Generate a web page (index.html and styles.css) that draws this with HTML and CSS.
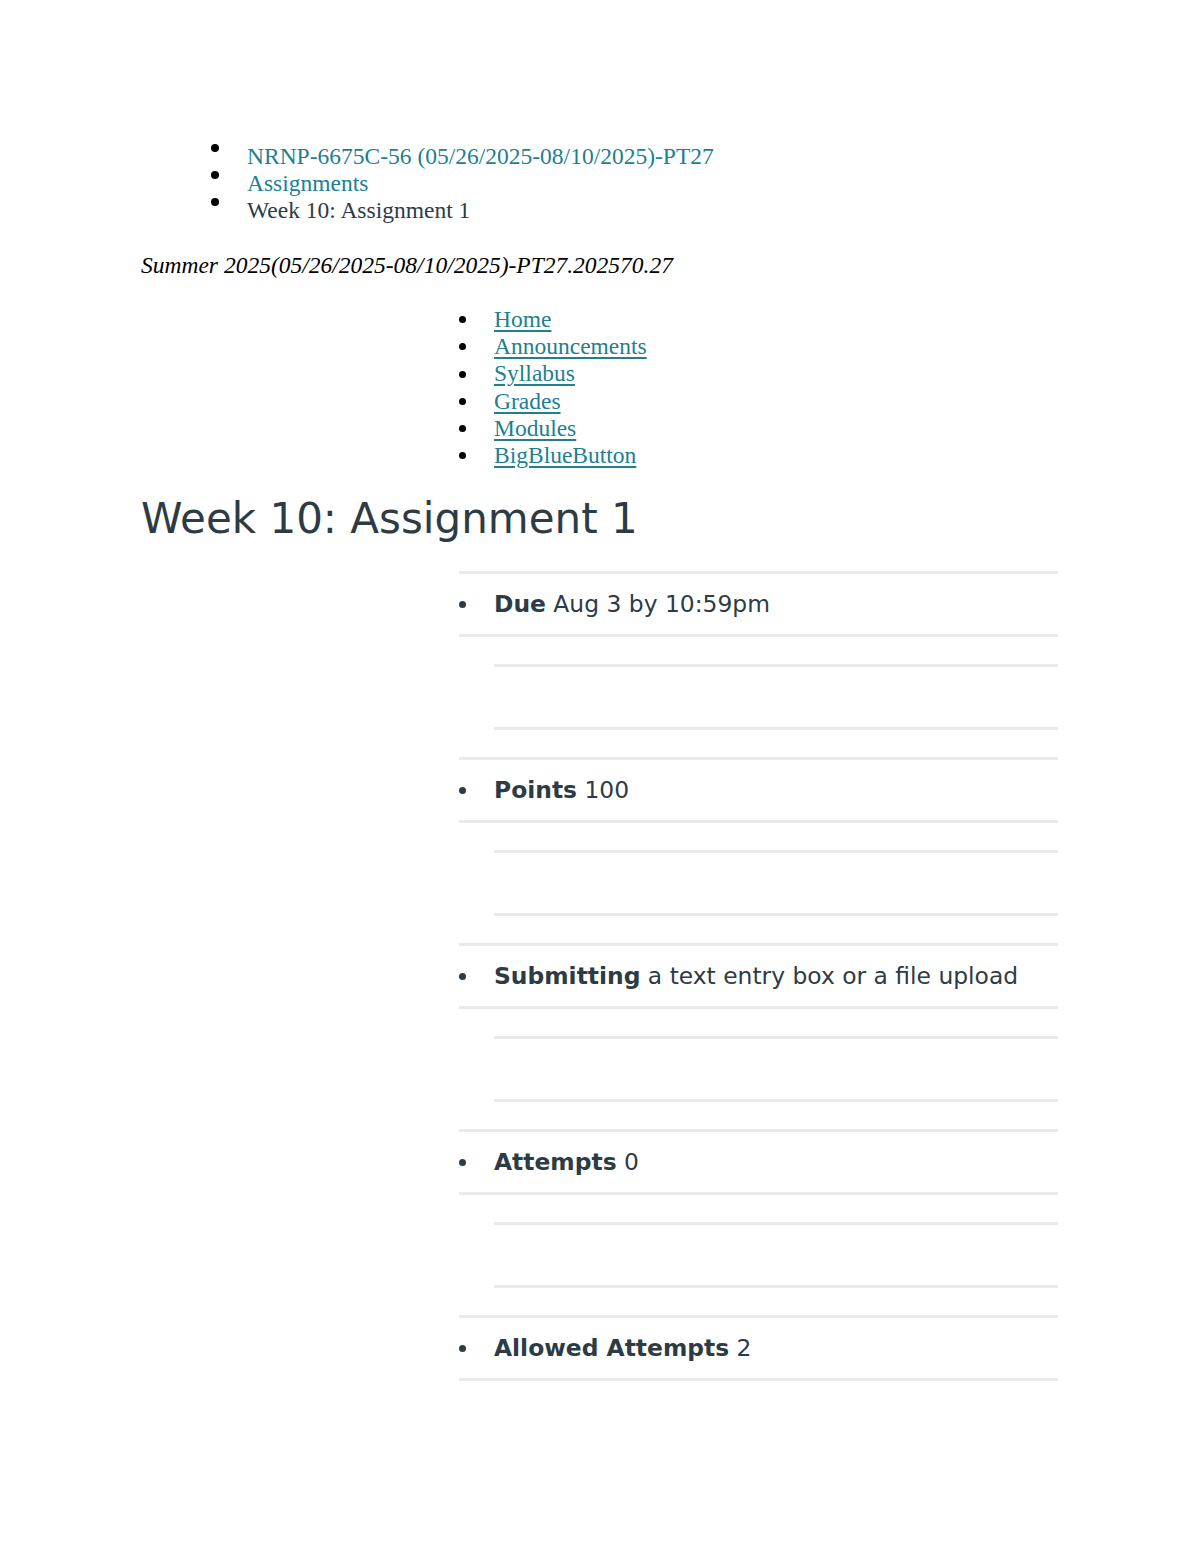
FILE: index.html
```html
<!DOCTYPE html>
<html lang="en">
<head>
<meta charset="utf-8">
<title>Week 10: Assignment 1</title>
<link rel="stylesheet" href="styles.css">
</head>
<body>
<div class="page">
  <ul class="crumbs">
    <li><a href="#">NRNP-6675C-56 (05/26/2025-08/10/2025)-PT27</a></li>
    <li><a href="#">Assignments</a></li>
    <li><span class="crumb-current">Week 10: Assignment 1</span></li>
  </ul>
  <p class="term">Summer 2025(05/26/2025-08/10/2025)-PT27.202570.27</p>
  <ul class="course-nav">
    <li><a href="#">Home</a></li>
    <li><a href="#">Announcements</a></li>
    <li><a href="#">Syllabus</a></li>
    <li><a href="#">Grades</a></li>
    <li><a href="#">Modules</a></li>
    <li><a href="#">BigBlueButton</a></li>
  </ul>
  <h1 class="title">Week 10: Assignment 1</h1>
  <div class="details">
    <div class="detail">
      <div class="detail-row"><strong>Due</strong>&nbsp;Aug 3 by 10:59pm</div>
      <div class="detail-spacer"></div>
    </div>
    <div class="detail">
      <div class="detail-row"><strong>Points</strong>&nbsp;100</div>
      <div class="detail-spacer"></div>
    </div>
    <div class="detail">
      <div class="detail-row"><strong>Submitting</strong>&nbsp;a text entry box or a file upload</div>
      <div class="detail-spacer"></div>
    </div>
    <div class="detail">
      <div class="detail-row"><strong>Attempts</strong>&nbsp;0</div>
      <div class="detail-spacer"></div>
    </div>
    <div class="detail">
      <div class="detail-row"><strong>Allowed Attempts</strong>&nbsp;2</div>
    </div>
  </div>
</div>
</body>
</html>
```
FILE: styles.css
```css
html, body {
  margin: 0;
  padding: 0;
  background: #ffffff;
}

.page {
  padding: 143px 0 0 141px;
  color: #2d3b45;
}

a {
  color: #217f8f;
}

.crumbs {
  list-style: none;
  margin: 0;
  padding: 0 0 0 70px;
  font-family: "Liberation Serif", "Times New Roman", serif;
  font-size: 23.5px;
  line-height: 27px;
}

.crumbs li {
  display: flex;
  align-items: flex-start;
}

.crumbs li::before {
  content: "";
  flex: none;
  width: 8px;
  height: 8px;
  margin-top: 1px;
  margin-right: 28px;
  border-radius: 50%;
  background: #000000;
}

.crumbs a {
  text-decoration: none;
}

.crumb-current {
  color: #2d3b45;
}

.term {
  margin: 28px 0 0 0;
  font-family: "Liberation Serif", "Times New Roman", serif;
  font-style: italic;
  font-size: 23.5px;
  line-height: 27px;
  color: #000000;
}

.course-nav {
  list-style: none;
  margin: 27px 0 0 0;
  padding: 0 0 0 318px;
  font-family: "Liberation Serif", "Times New Roman", serif;
  font-size: 23.5px;
  line-height: 27.2px;
}

.course-nav li {
  display: flex;
  align-items: center;
}

.course-nav li::before {
  content: "";
  flex: none;
  width: 7px;
  height: 7px;
  margin-right: 28px;
  border-radius: 50%;
  background: #000000;
}

.course-nav a {
  text-decoration: underline;
  text-underline-offset: 3px;
}

.title {
  margin: 25px 0 0 0;
  font-family: "DejaVu Sans", Verdana, sans-serif;
  font-weight: normal;
  font-size: 42px;
  line-height: 50px;
  color: #2d3b45;
}

.details {
  margin: 27px 0 0 318px;
  width: 599px;
  font-family: "DejaVu Sans", Verdana, sans-serif;
  font-size: 23.4px;
  color: #2d3b45;
}

.detail {
  border-top: 3px solid #e8eaec;
}

.detail-row {
  height: 60px;
  display: flex;
  align-items: center;
  border-bottom: 3px solid #e8eaec;
  white-space: nowrap;
}

.detail-row::before {
  content: "";
  flex: none;
  width: 7px;
  height: 7px;
  margin-right: 28px;
  border-radius: 50%;
  background: #2d3b45;
}

.detail-row strong {
  font-weight: bold;
}

.detail-spacer {
  margin: 27px 0 27px 35px;
  height: 60px;
  border-top: 3px solid #e8eaec;
  border-bottom: 3px solid #e8eaec;
}
```
